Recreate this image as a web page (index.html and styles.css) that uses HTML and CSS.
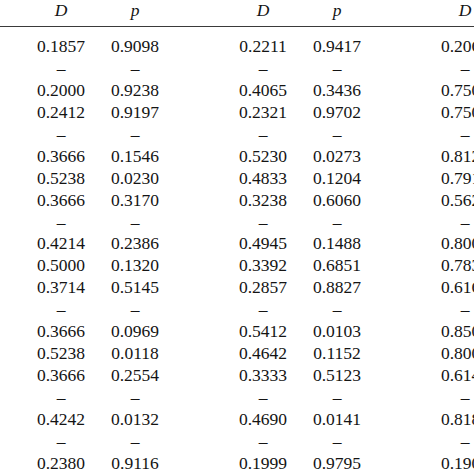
FILE: index.html
```html
<!DOCTYPE html>
<html>
<head>
<meta charset="utf-8">
<link rel="stylesheet" href="styles.css">
</head>
<body>
<div class="table">
  <div class="row head">
    <span></span><i>D</i><i>p</i><span></span><i>D</i><i>p</i><span></span><i>D</i><i>p</i>
  </div>
  <div class="body">
    <div class="row"><span></span><span>0.1857</span><span>0.9098</span><span></span><span>0.2211</span><span>0.9417</span><span></span><span>0.2063</span><span>0.9312</span></div>
    <div class="row"><span></span><span>–</span><span>–</span><span></span><span>–</span><span>–</span><span></span><span>–</span><span>–</span></div>
    <div class="row"><span></span><span>0.2000</span><span>0.9238</span><span></span><span>0.4065</span><span>0.3436</span><span></span><span>0.7500</span><span>0.0011</span></div>
    <div class="row"><span></span><span>0.2412</span><span>0.9197</span><span></span><span>0.2321</span><span>0.9702</span><span></span><span>0.7500</span><span>0.0013</span></div>
    <div class="row"><span></span><span>–</span><span>–</span><span></span><span>–</span><span>–</span><span></span><span>–</span><span>–</span></div>
    <div class="row"><span></span><span>0.3666</span><span>0.1546</span><span></span><span>0.5230</span><span>0.0273</span><span></span><span>0.8125</span><span>0.0001</span></div>
    <div class="row"><span></span><span>0.5238</span><span>0.0230</span><span></span><span>0.4833</span><span>0.1204</span><span></span><span>0.7916</span><span>0.0002</span></div>
    <div class="row"><span></span><span>0.3666</span><span>0.3170</span><span></span><span>0.3238</span><span>0.6060</span><span></span><span>0.5625</span><span>0.0142</span></div>
    <div class="row"><span></span><span>–</span><span>–</span><span></span><span>–</span><span>–</span><span></span><span>–</span><span>–</span></div>
    <div class="row"><span></span><span>0.4214</span><span>0.2386</span><span></span><span>0.4945</span><span>0.1488</span><span></span><span>0.8000</span><span>0.0001</span></div>
    <div class="row"><span></span><span>0.5000</span><span>0.1320</span><span></span><span>0.3392</span><span>0.6851</span><span></span><span>0.7833</span><span>0.0003</span></div>
    <div class="row"><span></span><span>0.3714</span><span>0.5145</span><span></span><span>0.2857</span><span>0.8827</span><span></span><span>0.6166</span><span>0.0051</span></div>
    <div class="row"><span></span><span>–</span><span>–</span><span></span><span>–</span><span>–</span><span></span><span>–</span><span>–</span></div>
    <div class="row"><span></span><span>0.3666</span><span>0.0969</span><span></span><span>0.5412</span><span>0.0103</span><span></span><span>0.8500</span><span>0.0001</span></div>
    <div class="row"><span></span><span>0.5238</span><span>0.0118</span><span></span><span>0.4642</span><span>0.1152</span><span></span><span>0.8000</span><span>0.0002</span></div>
    <div class="row"><span></span><span>0.3666</span><span>0.2554</span><span></span><span>0.3333</span><span>0.5123</span><span></span><span>0.6142</span><span>0.0048</span></div>
    <div class="row"><span></span><span>–</span><span>–</span><span></span><span>–</span><span>–</span><span></span><span>–</span><span>–</span></div>
    <div class="row"><span></span><span>0.4242</span><span>0.0132</span><span></span><span>0.4690</span><span>0.0141</span><span></span><span>0.8181</span><span>0.0001</span></div>
    <div class="row"><span></span><span>–</span><span>–</span><span></span><span>–</span><span>–</span><span></span><span>–</span><span>–</span></div>
    <div class="row"><span></span><span>0.2380</span><span>0.9116</span><span></span><span>0.1999</span><span>0.9795</span><span></span><span>0.1904</span><span>0.9632</span></div>
  </div>
</div>
</body>
</html>
```
FILE: styles.css
```css
html, body {
  margin: 0;
  padding: 0;
  background: #ffffff;
  overflow: hidden;
}
body {
  width: 474px;
  height: 474px;
  font-family: "Liberation Serif", "Times New Roman", serif;
  font-size: 17.5px;
  color: #141414;
}
.table {
  width: 640px;
}
.row {
  display: grid;
  grid-template-columns: 24px 74px 74px 54px 74px 74px 54px 74px 74px;
  height: 21.95px;
  line-height: 21.95px;
  text-align: center;
  white-space: nowrap;
}
.head {
  height: 26px;
  line-height: 21px;
  border-bottom: 1.5px solid #3a3a3a;
}
.head i {
  font-style: italic;
}
.body {
  padding-top: 9px;
}
```
